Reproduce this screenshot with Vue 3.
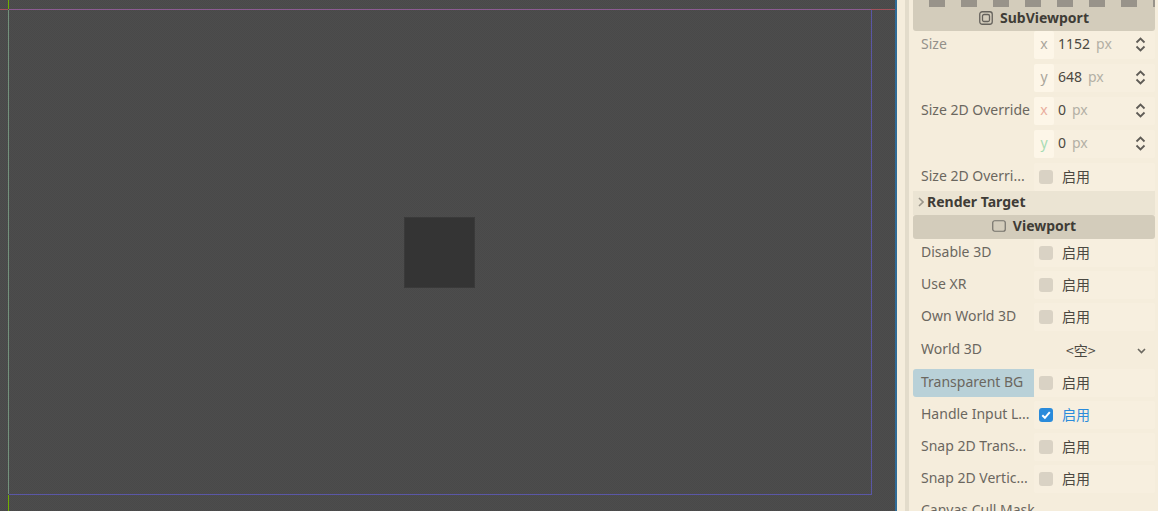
<script setup>
const sizeRows = [
  { label: 'Size', axis: 'x', axisClass: 'muted', value: '1152', dim: true },
  { label: '', axis: 'y', axisClass: 'muted', value: '648' },
  { label: 'Size 2D Override', axis: 'x', axisClass: 'red', value: '0' },
  { label: '', axis: 'y', axisClass: 'green', value: '0' }
]
const viewportRows = [
  { label: 'Disable 3D' },
  { label: 'Use XR' },
  { label: 'Own World 3D' },
  { label: 'World 3D', select: true },
  { label: 'Transparent BG', hover: true },
  { label: 'Handle Input L...', checked: true },
  { label: 'Snap 2D Trans...' },
  { label: 'Snap 2D Vertic...' }
]
const checkers = Array.from({ length: 8 })
</script>

<template>
  <div class="app">
    <div class="canvas">
      <div class="square"></div>
      <i class="line h-red"></i>
      <i class="line h-purple"></i>
      <i class="line h-red2"></i>
      <i class="line v-green"></i>
      <i class="line v-grey"></i>
      <i class="line v-green2"></i>
      <i class="line v-blue"></i>
      <i class="line h-blue"></i>
    </div>
    <div class="edge"></div>
    <div class="panel">
      <div class="strip"></div>
      <div class="inspector">
        <div class="checker"><span v-for="(c, i) in checkers" :key="i"></span></div>
        <div class="section">
          <svg class="sec-icon" width="14" height="14" viewBox="0 0 14 14">
            <rect x="0.75" y="0.75" width="12.5" height="12.5" rx="2.5" fill="none" stroke="#65625c" stroke-width="1.3" />
            <rect x="3.5" y="3.5" width="7" height="7" rx="1.5" fill="none" stroke="#65625c" stroke-width="1.3" />
          </svg>
          <span>SubViewport</span>
        </div>
        <div class="row" v-for="(r, i) in sizeRows" :key="'s' + i">
          <div class="label" :class="{ dim: r.dim }">{{ r.label }}</div>
          <div class="field">
            <span class="axis" :class="r.axisClass">{{ r.axis }}</span>
            <span class="num">{{ r.value }}</span>
            <span class="px">px</span>
            <svg class="updown" width="11" height="15" viewBox="0 0 11 15">
              <path d="M1.5 5.5 L5.5 1.5 L9.5 5.5 M1.5 9.5 L5.5 13.5 L9.5 9.5" fill="none" stroke="#5f5c56" stroke-width="1.8" />
            </svg>
          </div>
        </div>
        <div class="row override">
          <div class="label">Size 2D Overri...</div>
          <div class="field check">
            <span class="box"></span><span class="on">启用</span>
          </div>
        </div>
        <div class="group">
          <svg class="chev" width="6" height="10" viewBox="0 0 6 10">
            <path d="M1 1 L5 5 L1 9" fill="none" stroke="#9b968b" stroke-width="1.6" />
          </svg>
          <span>Render Target</span>
        </div>
        <div class="section viewport">
          <svg class="sec-icon" width="14" height="12" viewBox="0 0 14 12">
            <rect x="0.75" y="0.75" width="12.5" height="10.5" rx="2" fill="none" stroke="#74716b" stroke-width="1.2" />
          </svg>
          <span>Viewport</span>
        </div>
        <div class="vrows">
          <div class="row" v-for="(r, i) in viewportRows" :key="'v' + i" :class="{ tall: r.select }">
            <div class="label" :class="{ hover: r.hover }">{{ r.label }}</div>
            <div v-if="r.select" class="field select">
              <span class="empty">&lt;空&gt;</span>
              <svg width="9" height="6" viewBox="0 0 9 6">
                <path d="M1 1 L4.5 4.5 L8 1" fill="none" stroke="#6b6860" stroke-width="1.6" />
              </svg>
            </div>
            <div v-else class="field check">
              <span class="box" :class="{ checked: r.checked }">
                <svg v-if="r.checked" width="14" height="14" viewBox="0 0 14 14">
                  <path d="M3.3 7.2 L5.9 9.8 L10.8 4.2" fill="none" stroke="#fff" stroke-width="2" />
                </svg>
              </span>
              <span class="on" :class="{ blue: r.checked }">启用</span>
            </div>
          </div>
          <div class="row">
            <div class="label wide">Canvas Cull Mask</div>
            <div class="field blank"></div>
          </div>
        </div>
      </div>
    </div>
  </div>
</template>

<style>
html, body { margin: 0; overflow: hidden; }
</style>

<style scoped>
.app {
  display: flex;
  width: 1158px;
  height: 511px;
  overflow: hidden;
  font-family: "Noto Sans", "Noto Sans CJK SC", sans-serif;
  font-size: 14px;
  color: #6b675f;
}
.canvas {
  position: relative;
  width: 895px;
  flex: none;
  background: repeating-conic-gradient(#4d4d4d 0 25%, #494949 0 50%) 0 0 / 2px 2px;
}
.square {
  position: absolute;
  left: 404px;
  top: 217px;
  width: 71px;
  height: 71px;
  background: #343434;
  box-shadow: inset 0 0 0 1px #3a3a3a;
}
.line { position: absolute; display: block; }
.h-red { left: 0; top: 9px; width: 8px; height: 1px; background: #a3525c; }
.h-purple { left: 9px; top: 9px; width: 862px; height: 1px; background: #8c5c92; }
.h-red2 { left: 871px; top: 9px; width: 24px; height: 1px; background: #a3525c; }
.v-green { left: 8px; top: 0; width: 1px; height: 9px; background: #71b000; }
.v-grey { left: 8px; top: 10px; width: 1px; height: 484px; background: #74927c; }
.v-green2 { left: 8px; top: 495px; width: 1px; height: 16px; background: #71b000; }
.v-blue { left: 871px; top: 10px; width: 1px; height: 485px; background: #5a57a6; }
.h-blue { left: 9px; top: 494px; width: 862px; height: 1px; background: #5a57a6; }
.edge { width: 2px; flex: none; background: #2f6c98; }
.panel {
  flex: 1;
  min-width: 0;
  display: flex;
  background: #f5eddc;
  padding-left: 8px;
  padding-right: 3px;
}
.strip { width: 4px; flex: none; background: #e3dccb; margin-right: 4px; }
.inspector { flex: 1; min-width: 0; display: flex; flex-direction: column; }
.checker {
  height: 7px;
  flex: none;
  display: flex;
  gap: 16px;
  padding-left: 16px;
  background: #d3ccbb;
  overflow: hidden;
}
.checker span { width: 16px; flex: none; background: #98938a; }
.section {
  height: 24px;
  flex: none;
  display: flex;
  align-items: center;
  justify-content: center;
  gap: 7px;
  background: #d3ccbb;
  border-radius: 0 0 3px 3px;
  font-weight: 700;
  color: #3f3c36;
  padding-bottom: 3px;
  box-sizing: border-box;
}
.section.viewport {
  border-radius: 3px;
  padding-bottom: 3px;
}
.sec-icon { flex: none; }
.row {
  display: grid;
  grid-template-columns: 121px 121px;
  height: 28px;
  flex: none;
  margin-bottom: 5px;
}
.override { margin-bottom: 0; }
.label {
  padding: 0 0 0 8px;
  white-space: nowrap;
  line-height: 26px;
}
.label.dim { color: #93908a; }
.tall .label { line-height: 28px; }
.label.hover {
  background: #b9d1d8;
  border-radius: 3px 0 0 3px;
}
.field {
  display: flex;
  align-items: center;
  background: #f7efdf;
  border-radius: 2px;
  position: relative;
}
.field.blank { background: transparent; }
.axis {
  width: 20px;
  height: 100%;
  display: flex;
  align-items: center;
  justify-content: center;
  background: #fdf6e8;
  border-radius: 2px;
  flex: none;
  margin-right: 4px;
  padding-bottom: 3px;
  box-sizing: border-box;
}
.muted { color: #a9a59b; }
.red { color: #e9ae9d; }
.green { color: #a8dcb4; }
.num { color: #4b4841; margin-right: 6px; padding-bottom: 3px; }
.px { color: #b3afa5; padding-bottom: 3px; }
.updown { position: absolute; right: 9px; top: 6px; }
.check { padding-left: 5px; gap: 9px; }
.box {
  width: 14px;
  height: 14px;
  border-radius: 3px;
  background: #d9d2c4;
  flex: none;
  display: block;
}
.box svg { display: block; }
.box.checked { background: #2a8bdb; }
.on { font-size: 14px; line-height: 20px; padding-bottom: 3px; color: #4b4841; font-family: "Noto Sans CJK SC", "Noto Sans", sans-serif; }
.on.blue { color: #2a8bdb; }
.group {
  height: 24px;
  flex: none;
  display: flex;
  align-items: center;
  gap: 3px;
  padding-left: 5px;
  padding-bottom: 3px;
  box-sizing: border-box;
  background: #ebe4d3;
  font-weight: 700;
  color: #3f3c36;
}
.vrows { display: flex; flex-direction: column; }
.vrows .row { margin-bottom: 4px; }
.vrows .row.tall { height: 30px; }
.select { background: transparent; }
.empty {
  color: #4b4841;
  font-size: 14px;
  margin-left: 32px;
  font-family: "Noto Sans CJK SC", "Noto Sans", sans-serif;
}
.select svg { position: absolute; right: 9px; top: 13px; }
</style>
